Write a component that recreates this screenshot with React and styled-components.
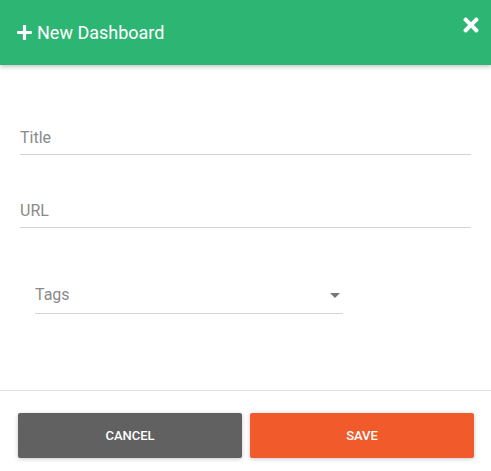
import React from "react";
import styled, { createGlobalStyle } from "styled-components";
import { FaPlus, FaTimes } from "react-icons/fa";

const GlobalStyle = createGlobalStyle`
  html, body {
    margin: 0;
    padding: 0;
    background: #fff;
    font-family: Roboto, "Liberation Sans", sans-serif;
  }
  * {
    box-sizing: border-box;
  }
`;

const Dialog = styled.div`
  display: flex;
  flex-direction: column;
  height: 100vh;
  background: #fff;
`;

const Header = styled.header`
  display: flex;
  justify-content: space-between;
  height: 65px;
  padding: 0 9px 0 16px;
  background-color: #2db673;
  box-shadow: 0 2px 4px rgba(0, 0, 0, 0.22);
  color: #fff;
  position: relative;
  z-index: 1;
`;

const Heading = styled.h1`
  display: flex;
  align-items: center;
  gap: 4px;
  margin: 0;
  font-size: 18px;
  font-weight: 400;
`;

const CloseButton = styled.button`
  align-self: flex-start;
  margin-top: 14px;
  padding: 0;
  border: none;
  background: none;
  color: #fff;
  cursor: pointer;
  display: flex;
`;

const Content = styled.div`
  flex: 1;
  display: flex;
  flex-direction: column;
  padding: 63px 20px 0;
`;

const Field = styled.label`
  display: flex;
  align-items: center;
  justify-content: space-between;
  width: ${(p) => p.$width || "100%"};
  margin: ${(p) => p.$margin || "0"};
  padding-bottom: ${(p) => p.$pad || 6}px;
  border-bottom: 1px solid #d3d3d9;
  font-size: 16px;
  line-height: 20px;
  color: #8a8a8a;
`;

const Caret = styled.span`
  width: 0;
  height: 0;
  margin-right: 3px;
  border-left: 5px solid transparent;
  border-right: 5px solid transparent;
  border-top: 5px solid #777;
`;

const Footer = styled.footer`
  display: grid;
  grid-template-columns: 1fr 1fr;
  gap: 8px;
  padding: 22px 17px 13px 18px;
  border-top: 1px solid #e1e2e6;
`;

const Button = styled.button`
  height: 45px;
  border: none;
  border-radius: 2px;
  background-color: ${(p) => p.$bg};
  color: #fff;
  font-family: Roboto, "Liberation Sans", sans-serif;
  font-size: 13px;
  font-weight: 500;
  text-transform: uppercase;
  box-shadow: 0 1px 4px rgba(0, 0, 0, 0.22);
  cursor: pointer;
`;

export default function App() {
  return (
    <>
      <GlobalStyle />
      <Dialog>
        <Header>
          <Heading>
            <FaPlus size={17} />
            New Dashboard
          </Heading>
          <CloseButton aria-label="close">
            <FaTimes size={22} />
          </CloseButton>
        </Header>
        <Content>
          <Field>Title</Field>
          <Field $margin="46px 0 0">URL</Field>
          <Field $width="308px" $margin="57px 0 0 15px" $pad={8}>
            Tags
            <Caret />
          </Field>
        </Content>
        <Footer>
          <Button $bg="#616161">Cancel</Button>
          <Button $bg="#f15a2b">Save</Button>
        </Footer>
      </Dialog>
    </>
  );
}
